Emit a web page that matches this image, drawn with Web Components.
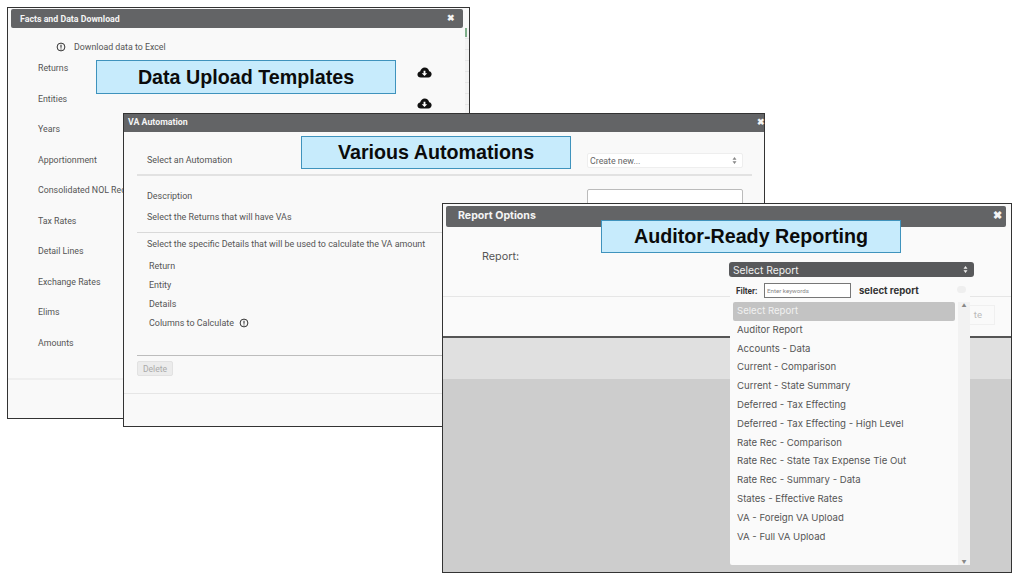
<!DOCTYPE html>
<html>
<head>
<meta charset="utf-8">
<style>
html, body { margin: 0; padding: 0; background: #fff; }
body { width: 1024px; height: 582px; position: relative; overflow: hidden; font-family: Roboto, "Liberation Sans", sans-serif; }
/* windows sit on a free canvas */
x-window { position: absolute; }
#win1 { left: 7px; top: 7px; width: 463px; height: 412px; z-index: 1; }
#win2 { left: 123px; top: 113px; width: 642px; height: 314px; z-index: 2; }
#win3 { left: 442px; top: 203px; width: 570px; height: 370px; z-index: 3; }
x-callout { position: absolute; z-index: 5; }
#c1 { left: 96px; top: 60px; width: 300px; height: 34px; }
#c2 { left: 301px; top: 136px; width: 270px; height: 33px; }
#c3 { left: 601px; top: 220px; width: 300px; height: 33px; }
</style>
</head>
<body>

<x-window id="win1" heading="Facts and Data Download" variant="one">
  <x-field-list slot="body" style="--gap:30.55px; --pad-top:13px; --pad-left:30px">
    <x-info-line style="margin:0 0 9px 18px">Download data to Excel</x-info-line>
    <x-label>Returns</x-label>
    <x-label>Entities</x-label>
    <x-label>Years</x-label>
    <x-label>Apportionment</x-label>
    <x-label>Consolidated NOL Rec</x-label>
    <x-label>Tax Rates</x-label>
    <x-label>Detail Lines</x-label>
    <x-label>Exchange Rates</x-label>
    <x-label>Elims</x-label>
    <x-label>Amounts</x-label>
  </x-field-list>
  <x-cloud slot="body" style="left:409px; top:39px"></x-cloud>
  <x-cloud slot="body" style="left:409px; top:70px"></x-cloud>
</x-window>

<x-window id="win2" heading="VA Automation" variant="two">
  <x-automation slot="body"></x-automation>
</x-window>

<x-window id="win3" heading="Report Options" variant="three">
  <x-report slot="body"></x-report>
</x-window>

<x-callout id="c1" size="19.7">Data Upload Templates</x-callout>
<x-callout id="c2" size="19.7">Various Automations</x-callout>
<x-callout id="c3" size="19.7">Auditor-Ready Reporting</x-callout>

<script>
const INFO_ICON = `<svg width="10" height="10" viewBox="0 0 10 10" style="display:block;flex:none"><circle cx="5" cy="5" r="3.9" fill="none" stroke="#333" stroke-width="1"/><path d="M5 2.7v3" stroke="#333" stroke-width="1.1"/><path d="M5 6.5v1" stroke="#333" stroke-width="1.1"/></svg>`;

class XWindow extends HTMLElement {
    constructor() {
        super();
        this.attachShadow({ mode: "open" });
    }
    connectedCallback() {
        const heading = this.getAttribute("heading") || "";
        const variant = this.getAttribute("variant");
        this.shadowRoot.innerHTML = `
            <style>
                :host { display: block; box-sizing: border-box; border: 1px solid #333; background: #f9f9f9; color: #555; font-family: Roboto, "Liberation Sans", sans-serif; }
                .frame { position: relative; width: 100%; height: 100%; display: flex; flex-direction: column; }
                .bar { background: #636466; color: #f4f4f4; font-weight: 700; font-size: 8.8px; display: flex; align-items: center; justify-content: space-between; flex: none; box-sizing: border-box; }
                .close { font-size: 9px; line-height: 1; }
                .body { flex: 1; position: relative; }
                .one .bar { margin: 1px 6px 0 3px; height: 19px; border-radius: 2px; padding: 0 8px 0 9px; }
                .two .bar { height: 18px; padding: 0 0 2px 4px; }
                .two .close { margin-right: -1px; }
                .three .bar { margin: 2px 5px 0 3px; height: 21px; border-radius: 2px; padding: 0 4px 2px 12px; font: 700 10.6px Inter, Roboto, sans-serif; }
                .three .close { font-size: 11px; }
                .edge { position: absolute; right: 0; top: 20px; width: 4px; bottom: 40px; background: repeating-linear-gradient(#f3f3f3 0 10px, #e6e6e6 10px 11px); }
                .edge::before { content: ""; display: block; height: 9px; width: 2px; background: #7fb08b; }
                .two .edge, .three .edge { display: none; }
            </style>
            <div class="frame ${variant}">
                <div class="bar"><span>${heading}</span><span class="close">✖</span></div>
                <div class="body"><slot name="body"></slot></div>
                <div class="edge"></div>
            </div>`;
    }
}

class XCallout extends HTMLElement {
    constructor() {
        super();
        this.attachShadow({ mode: "open" });
    }
    connectedCallback() {
        const size = this.getAttribute("size") || "20";
        this.shadowRoot.innerHTML = `
            <style>
                :host { display: flex; align-items: center; justify-content: center; box-sizing: border-box; background: #c7ebfc; border: 1px solid #3f93bd; color: #0b0b0b; font: 700 ${size}px "Liberation Sans", Arial, sans-serif; }
            </style>
            <slot></slot>`;
    }
}

class XFieldList extends HTMLElement {
    constructor() {
        super();
        this.attachShadow({ mode: "open" }).innerHTML = `
            <style>
                :host { display: block; box-sizing: border-box; height: 100%; padding: var(--pad-top) 0 0 var(--pad-left); position: relative; }
                .list { display: flex; flex-direction: column; }
                .foot { position: absolute; left: 0; right: 0; top: 350px; border-top: 2px solid #efefef; }
                ::slotted(x-label) { height: var(--gap); }
            </style>
            <div class="list"><slot></slot></div>
            <div class="foot"></div>`;
    }
}

class XLabel extends HTMLElement {
    constructor() {
        super();
        this.attachShadow({ mode: "open" }).innerHTML = `
            <style>
                :host { display: block; font-size: 8.8px; line-height: 12px; color: #555; white-space: nowrap; }
            </style>
            <slot></slot>`;
    }
}

class XInfoLine extends HTMLElement {
    constructor() {
        super();
        this.attachShadow({ mode: "open" }).innerHTML = `
            <style>
                :host { display: flex; align-items: center; gap: 8px; font-size: 8.8px; line-height: 12px; color: #555; white-space: nowrap; }
            </style>
            ${INFO_ICON}<slot></slot>`;
    }
}

class XCloud extends HTMLElement {
    constructor() {
        super();
        this.attachShadow({ mode: "open" }).innerHTML = `
            <style>:host { position: absolute; width: 15px; height: 11px; display: block; }</style>
            <svg width="15" height="11" viewBox="0 0 16 12" style="display:block">
                <path d="M4 11.5C1.8 11.5.3 10 .3 8.2c0-1.7 1.2-3 2.9-3.3C3.8 2.4 5.8.5 8.2.5c2.5 0 4.4 1.7 4.9 4 1.6.2 2.7 1.6 2.7 3.2 0 2-1.6 3.8-3.6 3.8z" fill="#111"/>
                <path d="M7 4.2h2v2.6h2l-3 3-3-3h2z" fill="#fff"/>
            </svg>`;
    }
}

class XAutomation extends HTMLElement {
    constructor() {
        super();
        this.attachShadow({ mode: "open" }).innerHTML = `
            <style>
                :host { display: block; height: 100%; position: relative; font-size: 8.95px; color: #555; }
                .top { height: 44px; box-sizing: border-box; margin: 0 12px 0 13px; border-bottom: 2px solid #e2e2e2; display: flex; justify-content: space-between; padding: 22px 9px 0 10px; }
                .top span { line-height: 12px; }
                .select { width: 156px; height: 15px; box-sizing: border-box; background: #fff; border: 1px solid #eee; border-radius: 2px; margin-top: -1px; padding: 0 5px 0 2px; display: flex; justify-content: space-between; align-items: center; color: #666; font-size: 8.8px; }
                .select svg { display: block; }
                .desc { height: 21px; margin: 14px 0 0 23px; display: flex; justify-content: space-between; line-height: 12px; }
                .area { width: 156px; height: 30px; background: #fff; border: 1px solid #bbb; border-radius: 2px; box-sizing: border-box; margin: -1px 21px 0 0; }
                .ret { margin-left: 13px; height: 21px; border-bottom: 1px solid #d9d9d9; padding: 0 0 0 10px; line-height: 12px; margin-right: 12px; }
                .spec { margin: 5px 0 0 23px; line-height: 12px; height: 18px; }
                .fields { margin: 0 0 0 25px; display: flex; flex-direction: column; }
                .fields div { height: 19px; line-height: 12px; display: flex; align-items: center; gap: 5px; }
                .rule { margin: 23px 12px 0 13px; border-top: 1px solid #bdbdbd; }
                button { display: block; margin: 5px 0 0 13px; width: 36px; height: 15px; padding: 0; background: #ececec; border: 1px solid #e2e2e2; border-radius: 2px; color: #aaa; font: 8.6px Roboto, sans-serif; }
                .foot { margin-top: 17px; border-top: 1px solid #e6e6e6; }
            </style>
            <div class="top"><span>Select an Automation</span><div class="select">Create new...<svg width="5" height="7" viewBox="0 0 5 7"><path d="M2.5 0l2 2.8H.5zM2.5 7l2-2.8H.5z" fill="#888"/></svg></div></div>
            <div class="desc"><span>Description</span><div class="area"></div></div>
            <div class="ret">Select the Returns that will have VAs</div>
            <div class="spec">Select the specific Details that will be used to calculate the VA amount</div>
            <div class="fields">
                <div>Return</div>
                <div>Entity</div>
                <div>Details</div>
                <div>Columns to Calculate ${INFO_ICON}</div>
            </div>
            <div class="rule"></div>
            <button>Delete</button>
            <div class="foot"></div>`;
    }
}

class XReport extends HTMLElement {
    constructor() {
        super();
        this.attachShadow({ mode: "open" }).innerHTML = `
            <style>
                :host { display: flex; flex-direction: column; height: 100%; position: relative; font-family: Inter, Roboto, sans-serif; color: #555; }
                .main { height: 111px; box-sizing: border-box; background: #fafafa; border-bottom: 2px solid #555; position: relative; display: flex; flex-direction: column; }
                .row { height: 70px; box-sizing: border-box; padding: 23px 0 0 39px; font: 10.8px Inter, Roboto, sans-serif; color: #555; border-bottom: 1px solid #e6e6e6; }
                .btn { align-self: flex-end; margin: 8px 16px 0 0; width: 44px; height: 20px; box-sizing: border-box; border: 1px solid #f0f0f0; text-align: right; padding-right: 12px; font: 9.6px/18px Roboto, sans-serif; color: #bbb; }
                .band { height: 41px; background: #e0e0e0; flex: none; }
                .rest { flex: 1; background: #cdcdcd; }
            </style>
            <div class="main">
                <div class="row">Report:</div>
                <div class="btn">te</div>
            </div>
            <div class="band"></div>
            <div class="rest"></div>
            <x-dropdown style="left:286px; top:35px"></x-dropdown>`;
    }
}

class XDropdown extends HTMLElement {
    constructor() {
        super();
        const items = ["Auditor Report", "Accounts - Data", "Current - Comparison", "Current - State Summary", "Deferred - Tax Effecting", "Deferred - Tax Effecting - High Level", "Rate Rec - Comparison", "Rate Rec - State Tax Expense Tie Out", "Rate Rec - Summary - Data", "States - Effective Rates", "VA - Foreign VA Upload", "VA - Full VA Upload"];
        this.attachShadow({ mode: "open" }).innerHTML = `
            <style>
                :host { position: absolute; width: 245px; display: block; font-family: Inter, Roboto, sans-serif; }
                .head { height: 15px; background: #58595b; border-radius: 3px; color: #f0f0f0; font-size: 10.3px; display: flex; align-items: center; justify-content: space-between; padding: 0 6px 0 4px; }
                .head svg { display: block; }
                .panel { margin: 2px 4px 0 1px; height: 286px; background: #fafafa; border-radius: 2px; display: flex; flex-direction: column; box-sizing: border-box; }
                .filter { height: 23px; flex: none; display: flex; align-items: center; padding-left: 6px; position: relative; }
                .filter b { font: 700 8.2px Roboto, sans-serif; color: #333; width: 28px; }
                .filter input { width: 87px; height: 15px; box-sizing: border-box; border: 1px solid #777; background: #fff; padding: 0 2px; font: 6.2px Roboto, sans-serif; margin: 0 8px 0 0; outline: none; }
                .filter input::placeholder { color: #888; }
                .filter strong { font: 700 9.6px Inter, sans-serif; color: #333; }
                .filter span { position: absolute; right: 4px; top: 7px; width: 9px; height: 7px; background: #efefef; border-radius: 4px; }
                .lists { flex: 1; display: flex; min-height: 0; }
                ul { list-style: none; margin: 0; padding: 0 3px; width: 228px; box-sizing: border-box; }
                li { height: 18.8px; line-height: 18.8px; font-size: 9.6px; color: #555; padding-left: 4px; white-space: nowrap; }
                li.on { background: #c3c3c3; color: #f1f1f1; border-radius: 2px; height: 18.5px; margin-bottom: .3px; }
                .scroll { width: 12px; background: #f2f2f2; display: flex; flex-direction: column; justify-content: space-between; align-items: center; font-size: 5px; color: #888; padding: 0; margin-left: auto; }
            </style>
            <div class="head">Select Report<svg width="5" height="7" viewBox="0 0 5 7"><path d="M2.5 0l2 2.8H.5zM2.5 7l2-2.8H.5z" fill="#eee"/></svg></div>
            <div class="panel">
                <div class="filter"><b>Filter:</b><input placeholder="Enter keywords"><strong>select report</strong><span></span></div>
                <div class="lists">
                    <ul>
                        <li class="on">Select Report</li>
                        ${items.map(i => `<li>${i}</li>`).join("")}
                    </ul>
                    <div class="scroll"><span>▲</span><span>▼</span></div>
                </div>
            </div>`;
    }
}

customElements.define("x-window", XWindow);
customElements.define("x-callout", XCallout);
customElements.define("x-field-list", XFieldList);
customElements.define("x-label", XLabel);
customElements.define("x-info-line", XInfoLine);
customElements.define("x-cloud", XCloud);
customElements.define("x-automation", XAutomation);
customElements.define("x-report", XReport);
customElements.define("x-dropdown", XDropdown);
</script>
</body>
</html>
